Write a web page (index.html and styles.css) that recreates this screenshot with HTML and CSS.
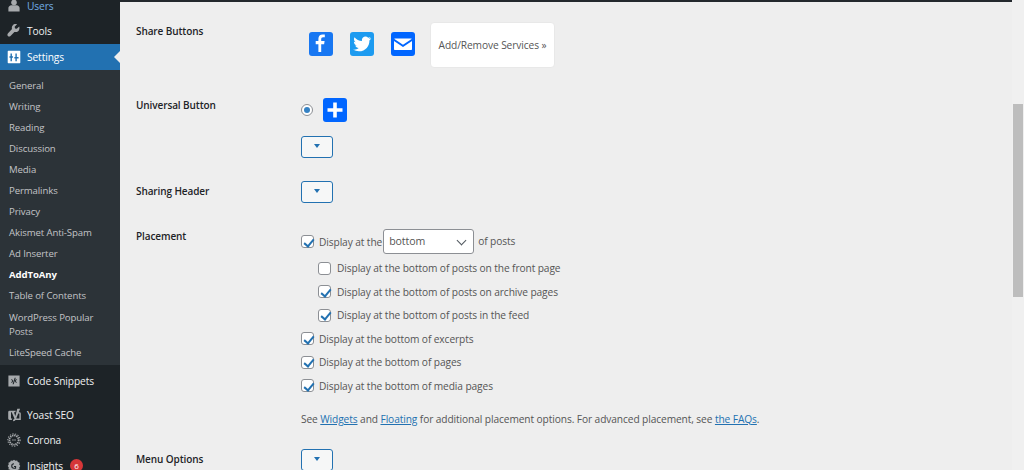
FILE: index.html
```html
<!DOCTYPE html>
<html lang="en">
<head>
    <meta charset="UTF-8">
    <title>AddToAny Settings</title>
    <link rel="stylesheet" href="styles.css">
</head>
<body>
    <nav class="sidebar">
        <a class="menu-item users">
            <svg class="menu-icon" viewBox="0 0 20 20"><circle cx="10" cy="5" r="4"/><path d="M2 18v-5c0-2 2-4 4-4h8c2 0 4 2 4 4v5z"/></svg>
            Users
        </a>
        <a class="menu-item">
            <svg class="menu-icon" viewBox="0 0 20 20"><path d="M17.5 3.5l-3.6 3.4-2.4-.6-.6-2.3 3.500-3.500c-2.300-.8-4.900-.2-6.300 1.500-1.300 1.500-1.500 3.400-.9 5.200L1.500 13.300c-1.200 1.200-1.200 2.700-.2 3.800 1 1 2.600 1 3.700-.1l5.600-5.700c1.900.6 3.800.3 5.300-1 1.700-1.500 2.300-4.400 1.600-6.800z"/></svg>
            Tools
        </a>
        <a class="menu-item current">
            <svg class="menu-icon" viewBox="0 0 20 20"><path fill-rule="evenodd" d="M2 1h16a1 1 0 0 1 1 1v16a1 1 0 0 1-1 1H2a1 1 0 0 1-1-1V2a1 1 0 0 1 1-1zm3 4v4H3.500v2H5v5h2v-5h1.500V9H7V5zm7 0v5h-1.500v2H12v4h2v-4h2.500v-2H14V5z"/></svg>
            Settings
        </a>
        <ul class="submenu">
            <li>General</li>
            <li>Writing</li>
            <li>Reading</li>
            <li>Discussion</li>
            <li>Media</li>
            <li>Permalinks</li>
            <li>Privacy</li>
            <li>Akismet Anti-Spam</li>
            <li>Ad Inserter</li>
            <li class="active">AddToAny</li>
            <li>Table of Contents</li>
            <li>WordPress Popular Posts</li>
            <li>LiteSpeed Cache</li>
        </ul>
        <a class="menu-item snippets">
            <svg class="menu-icon" viewBox="0 0 20 20"><path fill-rule="evenodd" d="M2 2h16v16H2zm9 3.500L8 14.500h1.500l3-9zM7 7l-1 .8L7.500 10 6 12.200l1 .8 2-3zm6 0l-2 3 2 3 1-.8L12.500 10 14 7.800z"/></svg>
            Code Snippets
        </a>
        <a class="menu-item yoast">
            <svg class="menu-icon" viewBox="0 0 20 20"><path d="M4 4h8l-1 2H5v9h2l-1 2H3a2 2 0 0 1-2-2V6a2 2 0 0 1 2-2zM14 1h4l-6 15c-.6 1.600-1.800 2.800-4 3v-2.200c1-.2 1.600-.8 1.900-1.800L6 6h3.200l2 5.400zM15 6h2a2 2 0 0 1 2 2v9h-8l.8-2H17V8h-2.800z"/></svg>
            Yoast SEO
        </a>
        <a class="menu-item corona">
            <svg class="menu-icon" viewBox="0 0 20 20"><circle cx="10" cy="10" r="6.500" fill="none" stroke="#a7aaad" stroke-width="2.500" stroke-dasharray="2 1"/><circle cx="10" cy="10" r="8.800" fill="none" stroke="#a7aaad" stroke-width="1.500" stroke-dasharray="1.800 2"/><circle cx="8.500" cy="10" r="1"/><circle cx="11.500" cy="10" r="1"/></svg>
            Corona
        </a>
        <a class="menu-item">
            <svg class="menu-icon" viewBox="0 0 20 20"><path fill-rule="evenodd" d="M10 1l2 1.500 2.500-.5 1 2.300 2.500 1-.5 2.700L19 10l-1.500 2 .5 2.500-2.500 1-1 2.500H5.500l-1-2.500-2.500-1 .5-2.500L1 10l1.500-2L2 5.300l2.500-1 1-2.300L8 2.500zM10 6a4 4 0 1 0 0 8h3v-4h-3v1.500h1.500v1H10a2.500 2.500 0 0 1 0-5z"/></svg>
            Insights <span class="badge">6</span>
        </a>
    </nav>

    <main class="content">
        <div class="topline"></div>

        <section class="row share-row">
            <h3>Share Buttons</h3>
            <div class="field share-field">
                <span class="service facebook">
                    <svg viewBox="0 0 24 24"><path fill="#fff" d="M15.800 5.200h-1.700c-1.400 0-1.900.8-1.900 2v1.900h3.400l-.5 3.200h-2.900V20H9.400v-7.700H6.700V9.100h2.700V6.800c0-2.800 1.700-4.300 4.200-4.300 1 0 1.700.1 2.200.1z"/></svg>
                </span>
                <span class="service twitter">
                    <svg viewBox="0 0 24 24"><path fill="#fff" d="M21 6.300c-.7.300-1.400.5-2.100.6.800-.5 1.300-1.200 1.600-2-.7.400-1.500.7-2.300.9-1.500-1.500-3.800-1.600-5.200-.2-.9.900-1.300 2.200-1 3.500-3-.1-5.700-1.500-7.500-3.800-1 1.700-.5 3.800 1.100 4.900-.6 0-1.200-.2-1.700-.5 0 1.800 1.300 3.300 3 3.700-.5.100-1.100.2-1.700.1.500 1.500 1.900 2.500 3.500 2.600-1.600 1.200-3.600 1.800-5.500 1.500 1.700 1.100 3.700 1.700 5.700 1.700 6.800 0 10.700-5.700 10.500-10.900.7-.5 1.300-1.200 1.800-2z"/></svg>
                </span>
                <span class="service email">
                    <svg viewBox="0 0 24 24"><path fill="#fff" d="M4 6.500h16c.5 0 .8.300.6.500L12 12.800 3.400 7c-.2-.2.100-.5.600-.5zM3 9l9 6 9-6v8c0 .6-.4 1-1 1H4c-.6 0-1-.4-1-1z"/></svg>
                </span>
                <a class="add-services">Add/Remove Services »</a>
            </div>
        </section>

        <section class="row universal-row">
            <h3>Universal Button</h3>
            <div class="field">
                <div class="universal-choice">
                    <span class="radio"></span>
                    <span class="service email">
                        <svg viewBox="0 0 24 24"><path fill="#fff" d="M10.200 4.500h3.600v5.700h5.700v3.600h-5.700v5.700h-3.600v-5.700H4.500v-3.600h5.700z"/></svg>
                    </span>
                </div>
                <button class="arrow-btn"></button>
            </div>
        </section>

        <section class="row header-row">
            <h3>Sharing Header</h3>
            <div class="field"><button class="arrow-btn"></button></div>
        </section>

        <section class="row placement-row">
            <h3>Placement</h3>
            <div class="field">
                <label class="check first-check"><span class="box on"></span><span>Display at the</span><span class="select">bottom</span><span class="after-select">of posts</span></label>
                <label class="check nested top-nested"><span class="box"></span>Display at the bottom of posts on the front page</label>
                <label class="check nested"><span class="box on"></span>Display at the bottom of posts on archive pages</label>
                <label class="check nested"><span class="box on"></span>Display at the bottom of posts in the feed</label>
                <label class="check"><span class="box on"></span>Display at the bottom of excerpts</label>
                <label class="check"><span class="box on"></span>Display at the bottom of pages</label>
                <label class="check"><span class="box on"></span>Display at the bottom of media pages</label>
                <p class="note">See <a>Widgets</a> and <a>Floating</a> for additional placement options. For advanced placement, see <a>the FAQs</a>.</p>
            </div>
        </section>

        <section class="row menu-row">
            <h3>Menu Options</h3>
            <div class="field"><button class="arrow-btn"></button></div>
        </section>
    </main>

    <div class="scrollbar"><div class="scroll-thumb"></div></div>
</body>
</html>
```

FILE: styles.css
```css
* {
    box-sizing: border-box;
}
html, body {
    height: 470px;
    overflow: hidden;
}
body {
    margin: 0;
    display: flex;
    font-family: "Open Sans", "Noto Sans", Arial, sans-serif;
    font-size: 10.2px;
    letter-spacing: -0.1px;
    color: #555;
    background: #eeeeee;
}

/* left admin menu */
.sidebar {
    width: 120px;
    flex-shrink: 0;
    height: 470px;
    overflow: hidden;
    background: #1d2327;
    color: #f0f0f1;
}
.menu-item {
    display: flex;
    align-items: center;
    gap: 6px;
    height: 25.5px;
    padding-left: 7px;
    color: #f0f0f1;
    font-size: 10.2px;
    position: relative;
    white-space: nowrap;
}
.menu-item.users {
    margin-top: -7px;
    color: #72aee6;
}
.menu-icon {
    width: 14px;
    height: 14px;
    flex-shrink: 0;
    fill: #a7aaad;
}
.current {
    background: #2271b1;
    color: #fff;
}
.current .menu-icon {
    fill: #fff;
}
.current::after {
    content: "";
    position: absolute;
    right: 0;
    top: 7px;
    border: 6px solid transparent;
    border-right-color: #eeeeee;
    border-left-width: 0;
}
.submenu {
    margin: 0;
    padding: 5.500px 0 1.500px;
    list-style: none;
    background: #2c3338;
    color: #c3c4c7;
    font-size: 9.6px;
}
.submenu li {
    padding: 3.550px 7px 3.550px 9px;
    line-height: 14px;
}
.submenu .active {
    color: #fff;
    font-weight: 700;
}
.snippets {
    margin-top: 4px;
    margin-bottom: 8px;
}
.yoast .menu-icon {
    width: 15px;
}
.yoast {
    gap: 5px;
}
.badge {
    display: inline-block;
    width: 13px;
    height: 13px;
    margin-left: 1px;
    border-radius: 50%;
    background: #d63638;
    color: #fff;
    font-size: 8px;
    line-height: 13px;
    text-align: center;
}

/* settings form */
.content {
    flex: 1;
    min-width: 0;
    padding-left: 16px;
}
.topline {
    height: 2px;
    margin-left: -16px;
    background: #23282d;
}
.row {
    display: grid;
    grid-template-columns: 165px 1fr;
}
h3 {
    margin: 0;
    font-size: 10px;
    font-weight: 600;
    line-height: 14px;
    color: #1d2327;
}
.share-row {
    padding-top: 20px;
}
.share-row h3 {
    padding-top: 2px;
}
.share-field {
    display: flex;
    gap: 17px;
    padding-left: 8px;
    height: 46px;
}
.service {
    width: 24px;
    height: 24px;
    margin-top: 10px;
    border-radius: 3px;
    display: block;
}
.service svg {
    display: block;
    width: 24px;
    height: 24px;
}
.facebook {
    background: #1877f2;
}
.twitter {
    background: #1d9bf0;
}
.email {
    background: #0166ff;
}
.add-services {
    width: 125px;
    height: 46px;
    margin-left: -2px;
    background: #fff;
    border: 1px solid #e8e8e8;
    border-radius: 4px;
    line-height: 44px;
    text-align: center;
    white-space: nowrap;
}
.universal-row {
    padding-top: 30px;
}
.universal-row h3 {
    padding-top: 0;
}
.universal-choice {
    display: flex;
    align-items: center;
    gap: 10px;
    height: 24px;
}
.universal-choice .service {
    margin-top: 0;
}
.radio {
    width: 12px;
    height: 12px;
    border: 1px solid #8c8f94;
    border-radius: 50%;
    background: #fff;
    position: relative;
}
.radio::after {
    content: "";
    position: absolute;
    left: 2px;
    top: 2px;
    width: 6px;
    height: 6px;
    border-radius: 50%;
    background: #3582c4;
}
.arrow-btn {
    display: block;
    width: 32px;
    height: 22px;
    padding: 0;
    margin: 14px 0 0;
    background: #f6f7f7;
    border: 1px solid #2271b1;
    border-radius: 3px;
    position: relative;
}
.arrow-btn::after {
    content: "";
    position: absolute;
    left: 12px;
    top: 7px;
    border: 3px solid transparent;
    border-top: 4px solid #2271b1;
    border-bottom: 0;
}
.header-row {
    padding-top: 23px;
}
.header-row .arrow-btn,
.menu-row .arrow-btn {
    margin-top: 0;
}
.header-row h3 {
    padding-top: 3px;
}
.placement-row {
    padding-top: 26px;
}
.check {
    display: flex;
    align-items: center;
    gap: 5px;
    height: 14px;
    margin-top: 9.500px;
    white-space: nowrap;
}
.first-check {
    height: 25px;
    margin-top: 0;
}
.top-nested {
    margin-top: 7px;
}
.nested {
    padding-left: 17px;
}
.nested .box {
    margin-right: 1px;
}
.box {
    width: 13px;
    height: 13px;
    flex-shrink: 0;
    border: 1px solid #8c8f94;
    border-radius: 3px;
    background: #fff;
    position: relative;
}
.box.on::after {
    content: "";
    position: absolute;
    left: 3.500px;
    top: 0.500px;
    width: 4px;
    height: 8px;
    border: solid #2271b1;
    border-width: 0 2px 2px 0;
    transform: rotate(40deg);
}
.select {
    width: 91px;
    height: 25px;
    margin-left: -4px;
    padding-left: 5px;
    line-height: 22px;
    background: #fff;
    border: 1px solid #8c8f94;
    border-radius: 3px;
    font-size: 10.6px;
    position: relative;
}
.select::after {
    content: "";
    position: absolute;
    right: 8px;
    top: 7px;
    width: 6px;
    height: 6px;
    border: solid #50575e;
    border-width: 0 1.500px 1.500px 0;
    transform: rotate(45deg);
}
.after-select {
    margin-left: -1px;
    margin-top: -2px;
}
.note {
    margin: 19px 0 0;
    line-height: 14px;
    white-space: nowrap;
}
.note a {
    color: #2271b1;
    text-decoration: underline;
}
.menu-row {
    padding-top: 23px;
}
.menu-row h3 {
    padding-top: 3px;
}

/* browser scrollbar */
.scrollbar {
    width: 12px;
    flex-shrink: 0;
    padding: 104px 1px 0;
    background: #f0f0f0;
}
.scroll-thumb {
    height: 193px;
    background: #bdbdbd;
}
```
